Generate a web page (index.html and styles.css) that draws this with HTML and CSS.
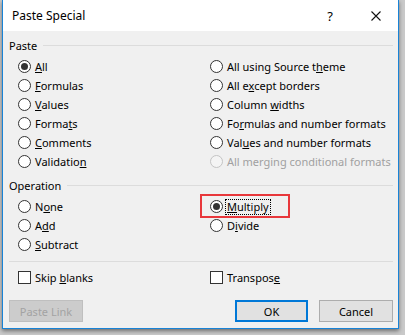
FILE: index.html
```html
<!DOCTYPE html>
<html lang="en">
<head>
  <meta charset="UTF-8">
  <title>Paste Special</title>
  <link rel="stylesheet" href="styles.css">
</head>
<body>
  <div class="dialog">
    <div class="titlebar">
      <span class="title">Paste Special</span>
      <span class="help">?</span>
      <span class="close">
        <svg width="10" height="10" viewBox="0 0 10 10"><path d="M0.5 0.5 L9.5 9.5 M9.5 0.5 L0.5 9.5" stroke="#111" stroke-width="1.1" fill="none"/></svg>
      </span>
    </div>

    <div class="content">
      <div class="group-label"><span>Paste</span></div>
      <div class="options">
        <label class="option"><span class="radio checked"></span><span><u>A</u>ll</span></label>
        <label class="option"><span class="radio"></span><span>All using Source t<u>h</u>eme</span></label>
        <label class="option"><span class="radio"></span><span><u>F</u>ormulas</span></label>
        <label class="option"><span class="radio"></span><span>All e<u>x</u>cept borders</span></label>
        <label class="option"><span class="radio"></span><span><u>V</u>alues</span></label>
        <label class="option"><span class="radio"></span><span>Column <u>w</u>idths</span></label>
        <label class="option"><span class="radio"></span><span>Forma<u>t</u>s</span></label>
        <label class="option"><span class="radio"></span><span>Fo<u>r</u>mulas and number formats</span></label>
        <label class="option"><span class="radio"></span><span><u>C</u>omments</span></label>
        <label class="option"><span class="radio"></span><span>Val<u>u</u>es and number formats</span></label>
        <label class="option"><span class="radio"></span><span>Validatio<u>n</u></span></label>
        <label class="option disabled"><span class="radio"></span><span>All merging conditional formats</span></label>
      </div>

      <div class="group-label op-label"><span>Operation</span></div>
      <div class="options">
        <label class="option"><span class="radio"></span><span>N<u>o</u>ne</span></label>
        <label class="option highlight"><span class="radio checked"></span><span class="focus"><u>M</u>ultiply</span></label>
        <label class="option"><span class="radio"></span><span>A<u>d</u>d</span></label>
        <label class="option"><span class="radio"></span><span>D<u>i</u>vide</span></label>
        <label class="option"><span class="radio"></span><span><u>S</u>ubtract</span></label>
      </div>

      <div class="separator"></div>

      <div class="options checks">
        <label class="option"><span class="checkbox"></span><span>Skip <u>b</u>lanks</span></label>
        <label class="option"><span class="checkbox"></span><span>Transpos<u>e</u></span></label>
      </div>

      <div class="buttons">
        <button class="btn disabled">Paste <u>L</u>ink</button>
        <span class="spacer"></span>
        <button class="btn default">OK</button>
        <button class="btn">Cancel</button>
      </div>
    </div>
  </div>
</body>
</html>
```

FILE: styles.css
```css
body {
  margin: 0;
  width: 405px;
  height: 335px;
  overflow: hidden;
  background: #c9c9c9;
  font-family: "Noto Sans", sans-serif;
  font-size: 11px;
  color: #000;
}

.dialog {
  margin-left: 2px;
  width: 395px;
  height: 328px;
  border: 1px solid #1883d7;
  border-top: 0;
  background: #f0f0f0;
  box-shadow: 0 2px 4px rgba(0, 0, 0, 0.45);
  display: flex;
  flex-direction: column;
}

.titlebar {
  height: 31px;
  background: #fff;
  display: flex;
  align-items: center;
  padding-left: 9px;
}

.title {
  flex: 1;
  font-size: 12px;
  padding-bottom: 1px;
}

.help {
  font-size: 13px;
  width: 46px;
  text-align: center;
  margin-left: 2px;
}

.close {
  width: 46px;
  display: flex;
  justify-content: center;
  margin-right: -1px;
}

.content {
  padding: 0 5px 0 6px;
  flex: 1;
  display: flex;
  flex-direction: column;
}

.group-label {
  display: flex;
  align-items: center;
  height: 14px;
  margin-top: 7px;
  gap: 6px;
}

.group-label::after {
  content: "";
  flex: 1;
  height: 1px;
  background: #dcdcdc;
  margin-top: 1px;
}

.op-label {
  margin-top: 7px;
}

.options {
  display: grid;
  grid-template-columns: 192px 1fr;
  grid-auto-rows: 19px;
  padding-left: 9px;
  margin-top: 5px;
}

.option {
  display: flex;
  align-items: center;
  position: relative;
  white-space: nowrap;
}

.radio {
  width: 11px;
  height: 11px;
  border: 1px solid #333;
  border-radius: 50%;
  background: #fff;
  margin-right: 4px;
  flex: 0 0 auto;
  display: flex;
  align-items: center;
  justify-content: center;
}

.radio.checked::after {
  content: "";
  width: 7px;
  height: 7px;
  border-radius: 50%;
  background: #333;
}

.option.disabled {
  color: #a0a0a0;
}

.option.disabled .radio {
  border-color: #c4c4c4;
  background: #f4f4f4;
}

.focus {
  outline: 1px dotted #000;
  outline-offset: 0;
  padding: 0 1px;
  margin-left: -1px;
  line-height: 14px;
}

/* red annotation box drawn over the Multiply option */
.highlight::after {
  content: "";
  position: absolute;
  left: -10px;
  top: -3px;
  width: 86px;
  height: 20px;
  border: 2px solid #e8373b;
}

.separator {
  height: 1px;
  background: #dcdcdc;
  margin-top: 7px;
}

.checks {
  margin-top: 6px;
}

.checkbox {
  width: 11px;
  height: 11px;
  border: 1px solid #333;
  background: #fff;
  margin-right: 4px;
  flex: 0 0 auto;
}

.buttons {
  display: flex;
  margin-top: 13px;
  gap: 11px;
}

.spacer {
  flex: 1;
}

.btn {
  width: 74px;
  height: 22px;
  background: #e1e1e1;
  border: 1px solid #adadad;
  font-family: "Noto Sans", sans-serif;
  font-size: 11px;
  padding: 0;
  color: #000;
}

.btn u {
  text-decoration: none;
}

.btn.disabled {
  background: #cccccc;
  border-color: #bfbfbf;
  color: #a3a3a3;
}

.btn.default {
  width: 73px;
  border: 2px solid #0078d7;
}
```
